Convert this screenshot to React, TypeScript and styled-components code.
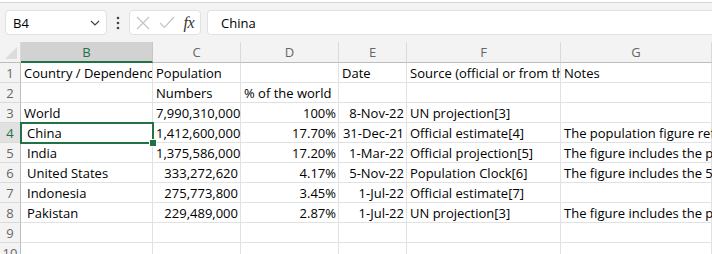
import React from "react";
import styled, { createGlobalStyle } from "styled-components";

const GlobalStyle = createGlobalStyle`
  html, body { margin: 0; padding: 0; background: #ffffff; }
  body { font-family: "Open Sans", "Liberation Sans", Arial, sans-serif; }
`;

const green = "#217346";

type Align = "left" | "right";
type CellData = { text?: string; align?: Align; indent?: boolean; clip?: boolean };

const columns = ["B", "C", "D", "E", "F", "G"];
const colWidths = "21px 132px 88px 98px 68px 154px 1fr";

const rows: CellData[][] = [
  [
    { text: "Country / Dependency", clip: true },
    { text: "Population" },
    {},
    { text: "Date" },
    { text: "Source (official or from the United Nations)", clip: true },
    { text: "Notes" },
  ],
  [{}, { text: "Numbers" }, { text: "% of the world" }, {}, {}, {}],
  [
    { text: "World" },
    { text: "7,990,310,000", align: "right" },
    { text: "100%", align: "right" },
    { text: "8-Nov-22", align: "right" },
    { text: "UN projection[3]" },
    {},
  ],
  [
    { text: "China", indent: true },
    { text: "1,412,600,000", align: "right" },
    { text: "17.70%", align: "right" },
    { text: "31-Dec-21", align: "right" },
    { text: "Official estimate[4]" },
    { text: "The population figure refers to mainland China only" },
  ],
  [
    { text: "India", indent: true },
    { text: "1,375,586,000", align: "right" },
    { text: "17.20%", align: "right" },
    { text: "1-Mar-22", align: "right" },
    { text: "Official projection[5]" },
    { text: "The figure includes the population of Jammu" },
  ],
  [
    { text: "United States", indent: true },
    { text: "333,272,620", align: "right" },
    { text: "4.17%", align: "right" },
    { text: "5-Nov-22", align: "right" },
    { text: "Population Clock[6]" },
    { text: "The figure includes the 50 states" },
  ],
  [
    { text: "Indonesia", indent: true },
    { text: "275,773,800", align: "right" },
    { text: "3.45%", align: "right" },
    { text: "1-Jul-22", align: "right" },
    { text: "Official estimate[7]" },
    {},
  ],
  [
    { text: "Pakistan", indent: true },
    { text: "229,489,000", align: "right" },
    { text: "2.87%", align: "right" },
    { text: "1-Jul-22", align: "right" },
    { text: "UN projection[3]" },
    { text: "The figure includes the population of Azad Kashmir" },
  ],
  [{}, {}, {}, {}, {}, {}],
  [{}, {}, {}, {}, {}, {}],
];

const Page = styled.div`
  width: 712px;
  height: 254px;
  overflow: hidden;
  background: #f3f3f3;
  color: #000;
  font-size: 13px;
`;

const TopEdge = styled.div`
  height: 2px;
  background: #ffffff;
  border-bottom: 1px solid #d6d6d6;
`;

const FormulaBar = styled.div`
  display: flex;
  align-items: center;
  height: 25px;
  padding: 7px 0 7px 5px;
`;

const Box = styled.div`
  height: 25px;
  box-sizing: border-box;
  background: #ffffff;
  border: 1px solid #e1e1e1;
  border-radius: 4px;
  display: flex;
  align-items: center;
`;

const NameBox = styled(Box)`
  width: 102px;
  padding: 0 6px 0 7px;
  justify-content: space-between;
`;

const Dots = styled.div`
  width: 22px;
  display: flex;
  justify-content: center;
`;

const FxButtons = styled(Box)`
  width: 72px;
  padding: 0 6px 0 6px;
  justify-content: space-between;
`;

const FxText = styled.span`
  font-family: "Liberation Serif", "Times New Roman", serif;
  font-style: italic;
  font-size: 16px;
  color: #333;
  letter-spacing: -0.5px;
`;

const FormulaInput = styled(Box)`
  flex: 1;
  margin-left: 6px;
  border-right: none;
  border-radius: 4px 0 0 4px;
  padding-left: 13px;
`;

const Grid = styled.div`
  display: grid;
  grid-template-columns: ${colWidths};
  grid-template-rows: 21px;
  grid-auto-rows: 20px;
  background: #ffffff;
  position: relative;
`;

const Corner = styled.div`
  background: #f3f3f3;
  border-right: 1px solid #d9d9d9;
  border-bottom: 1px solid #bdbdbd;
  box-sizing: border-box;
  overflow: hidden;
`;

const ColHeader = styled.div<{ $active?: boolean }>`
  box-sizing: border-box;
  display: flex;
  align-items: center;
  justify-content: center;
  background: ${(p) => (p.$active ? "#d2d2d2" : "#f3f3f3")};
  color: ${(p) => (p.$active ? green : "#666")};
  border-right: 1px solid ${(p) => (p.$active ? "#c6c6c6" : "#dadada")};
  border-bottom: ${(p) => (p.$active ? `2px solid ${green}` : "1px solid #bdbdbd")};
`;

const RowHeader = styled.div<{ $active?: boolean }>`
  box-sizing: border-box;
  display: flex;
  align-items: center;
  justify-content: center;
  background: ${(p) => (p.$active ? "#e1e1e1" : "#f3f3f3")};
  color: ${(p) => (p.$active ? green : "#666")};
  border-right: 1px solid #bdbdbd;
  border-bottom: 1px solid #dadada;
`;

const Cell = styled.div<{ $align: Align; $indent?: boolean; $clip?: boolean }>`
  box-sizing: border-box;
  border-right: 1px solid #e1e1e1;
  border-bottom: 1px solid #e1e1e1;
  line-height: 20px;
  padding: 0 ${(p) => (p.$align === "right" ? "2px" : "0")} 0
    ${(p) => (p.$indent ? "6px" : "3px")};
  text-align: ${(p) => p.$align};
  white-space: nowrap;
  overflow: ${(p) => (p.$clip ? "hidden" : "visible")};
  min-width: 0;
`;

const Selection = styled.div`
  position: absolute;
  left: 20px;
  top: 80px;
  width: 134px;
  height: 22px;
  box-sizing: border-box;
  border: 2px solid ${green};
  pointer-events: none;
`;

const Handle = styled.div`
  position: absolute;
  right: -5px;
  bottom: -5px;
  width: 6px;
  height: 6px;
  background: ${green};
  border: 1px solid #ffffff;
`;

const Chevron = () => (
  <svg width="10" height="6" viewBox="0 0 10 6">
    <path d="M1 1 L5 5 L9 1" fill="none" stroke="#444" strokeWidth="1.2" />
  </svg>
);

const Cross = () => (
  <svg width="14" height="14" viewBox="0 0 14 14">
    <path d="M1 1 L13 13 M13 1 L1 13" stroke="#c4c4c4" strokeWidth="1.2" />
  </svg>
);

const Check = () => (
  <svg width="16" height="13" viewBox="0 0 16 13">
    <path d="M1 7 L5.5 11.5 L15 1" fill="none" stroke="#c4c4c4" strokeWidth="1.2" />
  </svg>
);

const VDots = () => (
  <svg width="4" height="14" viewBox="0 0 4 14">
    <circle cx="2" cy="2" r="1.3" fill="#444" />
    <circle cx="2" cy="7" r="1.3" fill="#444" />
    <circle cx="2" cy="12" r="1.3" fill="#444" />
  </svg>
);

const CornerTriangle = () => (
  <svg width="21" height="21" viewBox="0 0 21 21" style={{ display: "block" }}>
    <path d="M17 5 L17 17 L5 17 Z" fill="#dcdcdc" />
  </svg>
);

export default function App() {
  return (
    <>
      <GlobalStyle />
      <Page>
        <TopEdge />
        <FormulaBar>
          <NameBox>
            <span>B4</span>
            <Chevron />
          </NameBox>
          <Dots>
            <VDots />
          </Dots>
          <FxButtons>
            <Cross />
            <Check />
            <FxText>fx</FxText>
          </FxButtons>
          <FormulaInput>China</FormulaInput>
        </FormulaBar>
        <Grid>
          <Corner>
            <CornerTriangle />
          </Corner>
          {columns.map((c) => (
            <ColHeader key={c} $active={c === "B"}>
              {c}
            </ColHeader>
          ))}
          {rows.map((row, i) => (
            <React.Fragment key={i}>
              <RowHeader $active={i === 3}>{i + 1}</RowHeader>
              {row.map((cell, j) => (
                <Cell
                  key={j}
                  $align={cell.align ?? "left"}
                  $indent={cell.indent}
                  $clip={cell.clip}
                >
                  {cell.text}
                </Cell>
              ))}
            </React.Fragment>
          ))}
          <Selection>
            <Handle />
          </Selection>
        </Grid>
      </Page>
    </>
  );
}
